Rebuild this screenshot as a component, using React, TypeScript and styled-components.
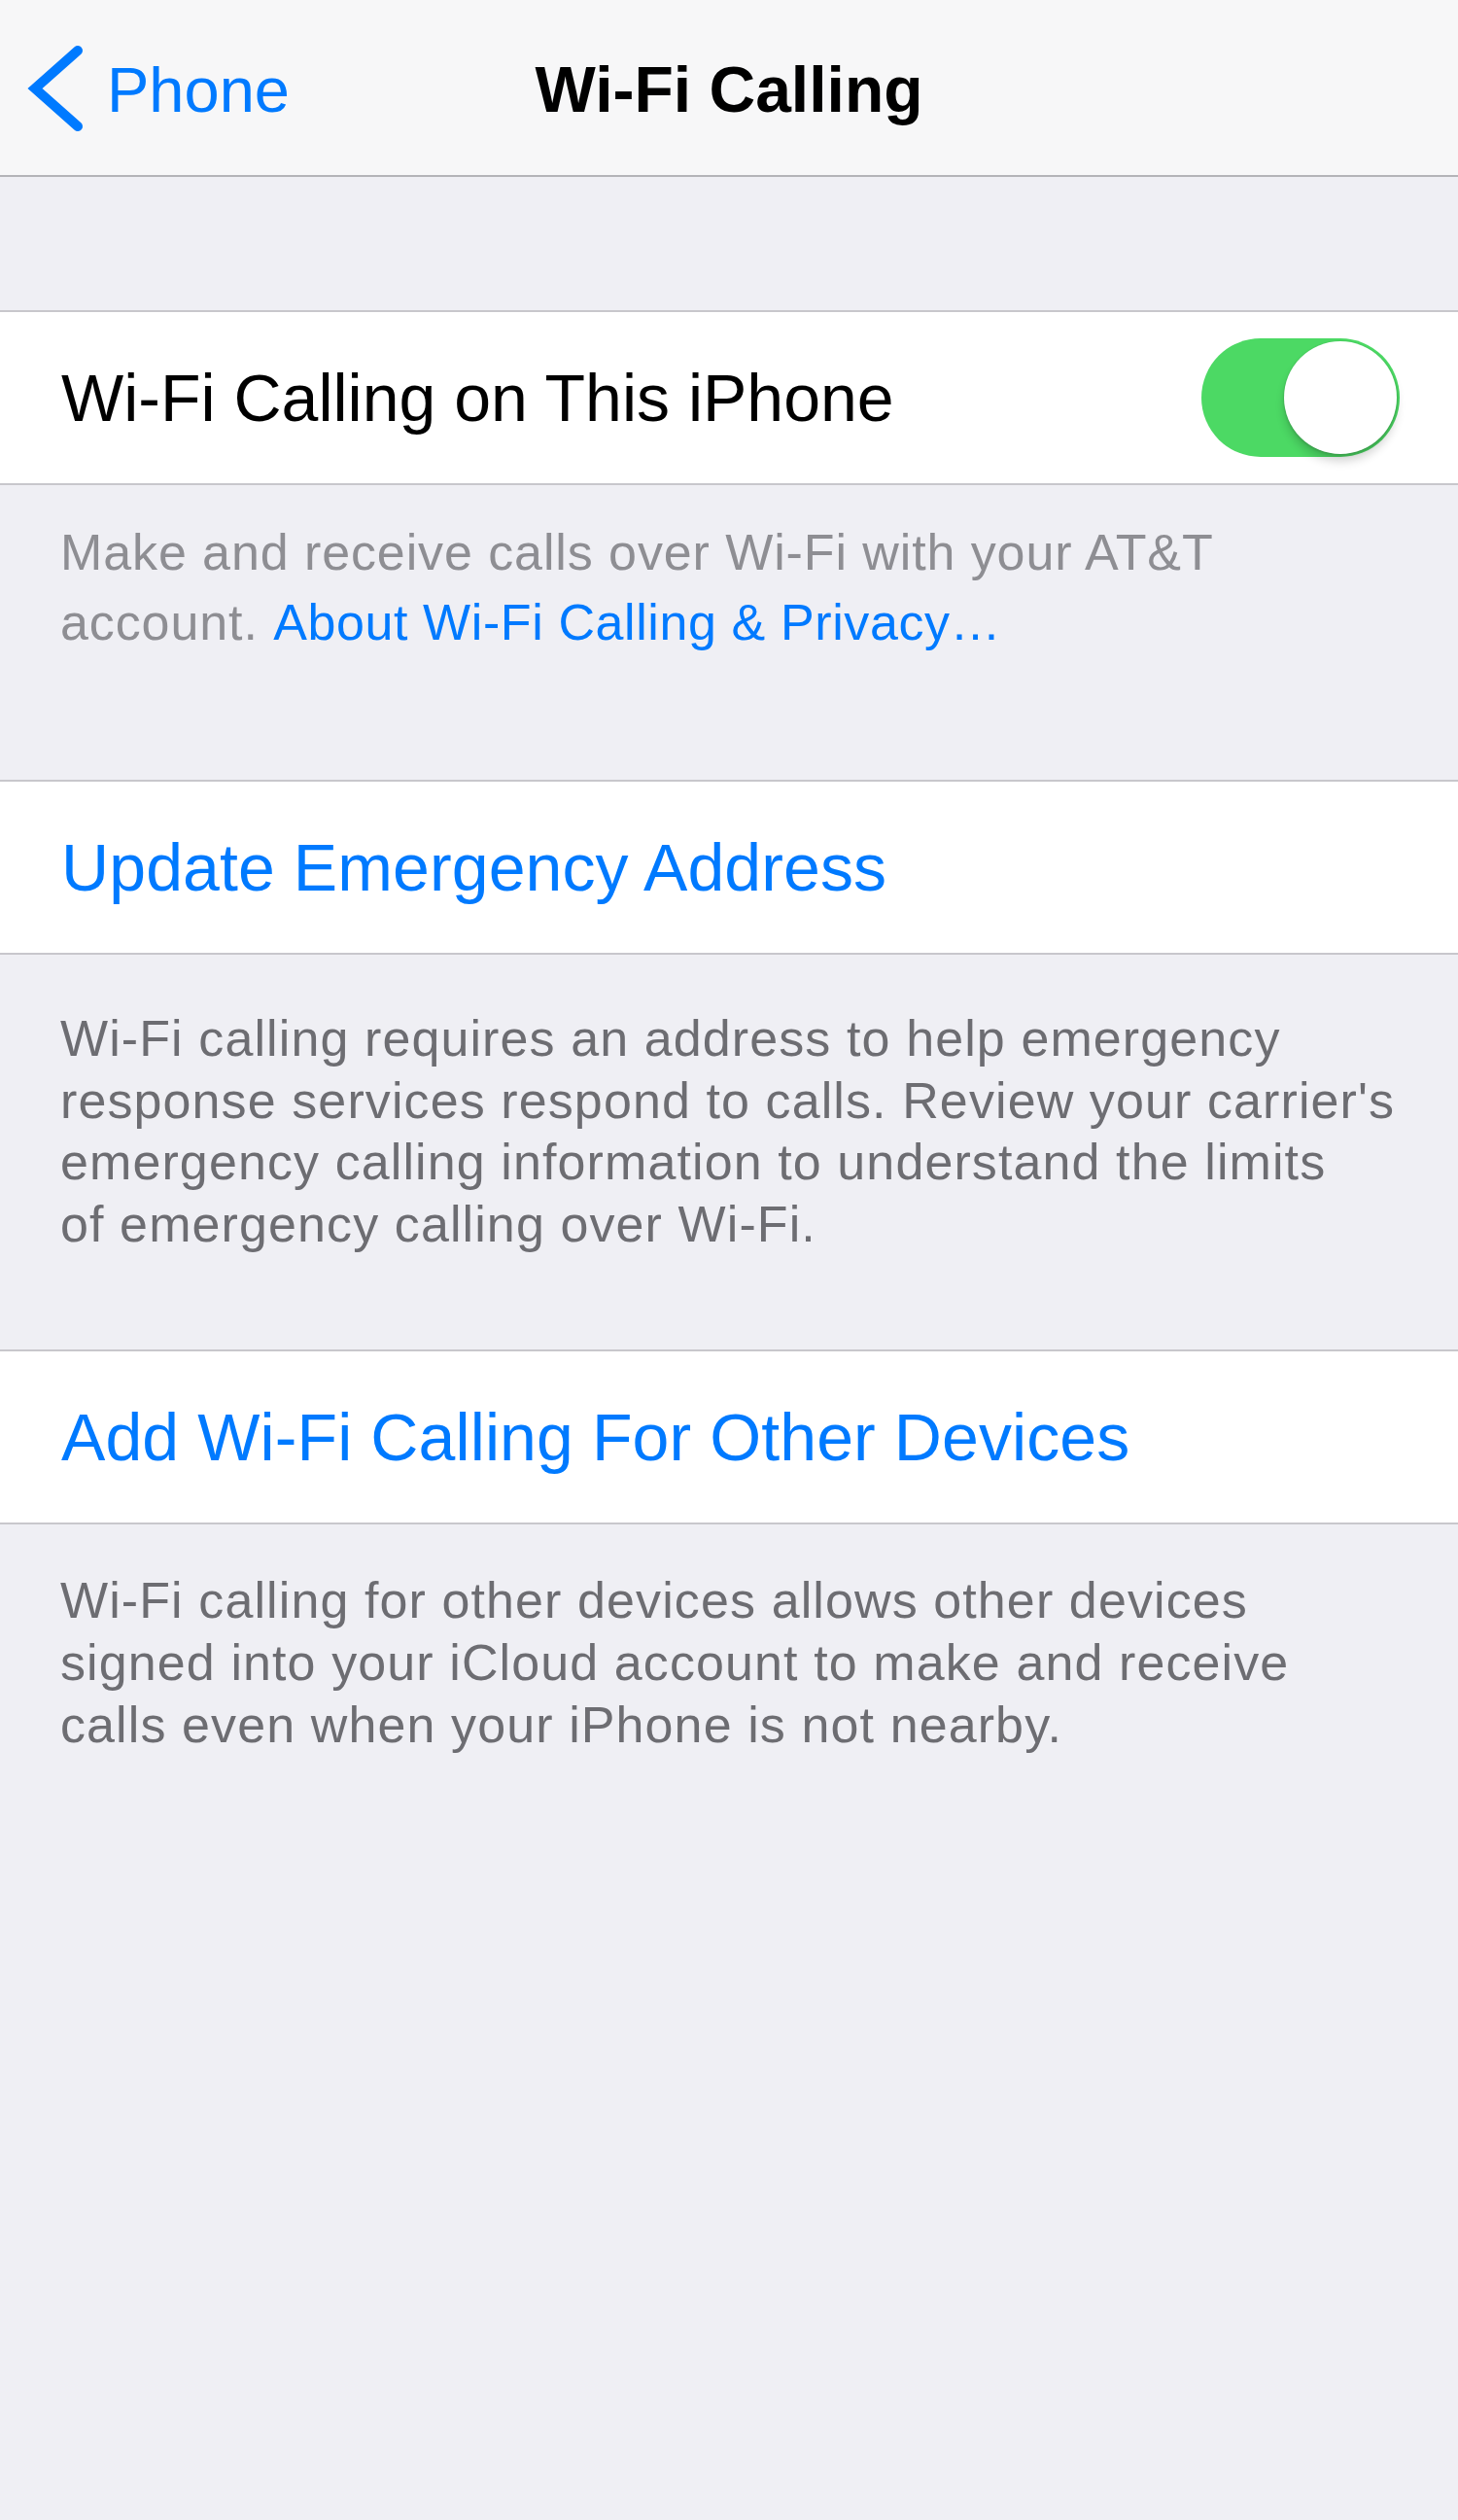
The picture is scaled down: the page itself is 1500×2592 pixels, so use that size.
import React from "react";
import styled, { createGlobalStyle } from "styled-components";

const GlobalStyle = createGlobalStyle`
  html, body {
    margin: 0;
    padding: 0;
    background: #efeff4;
  }
  body {
    font-family: "Liberation Sans", Arial, sans-serif;
    -webkit-font-smoothing: antialiased;
  }
`;

const BackChevron: React.FunctionComponent = () => (
  <svg width="60" height="96" viewBox="0 0 60 96">
    <polyline
      points="52,8 8,47 52,86"
      fill="none"
      stroke="#007aff"
      strokeWidth="10"
      strokeLinecap="round"
      strokeLinejoin="miter"
    />
  </svg>
);

const Switch: React.FunctionComponent<{ on: boolean }> = ({ on }) => (
  <Track $on={on}>
    <Thumb />
  </Track>
);

const App: React.FunctionComponent = () => {
  return (
    <Page>
      <GlobalStyle />
      <NavBar>
        <BackButton>
          <BackChevron />
          <BackLabel>Phone</BackLabel>
        </BackButton>
        <NavTitle>Wi-Fi Calling</NavTitle>
        <span />
      </NavBar>

      <Group $top={137}>
        <Cell>
          <CellLabel>Wi-Fi Calling on This iPhone</CellLabel>
          <Switch on />
        </Cell>
      </Group>
      <Footer $top={33} $bottom={126} $lineHeight={72} $light>
        Make and receive calls over Wi-Fi with your AT&amp;T account.{" "}
        <FooterLink>About Wi-Fi Calling &amp; Privacy…</FooterLink>
      </Footer>

      <Group>
        <Cell>
          <CellLabel $link>Update Emergency Address</CellLabel>
        </Cell>
      </Group>
      <Footer $top={55} $bottom={97} $lineHeight={63.5}>
        Wi-Fi calling requires an address to help emergency response services
        respond to calls. Review your carrier's emergency calling information
        to understand the limits
        <br />
        of emergency calling over Wi-Fi.
      </Footer>

      <Group>
        <Cell>
          <CellLabel $link>Add Wi-Fi Calling For Other Devices</CellLabel>
        </Cell>
      </Group>
      <Footer $top={46} $bottom={40} $lineHeight={64}>
        Wi-Fi calling for other devices allows other devices signed into your
        iCloud account to make and receive calls even when your iPhone is not
        nearby.
      </Footer>
    </Page>
  );
};

export default App;

const Page = styled.div`
  min-height: 2592px;
  background: #efeff4;
  display: flex;
  flex-direction: column;
`;

const NavBar = styled.header`
  box-sizing: border-box;
  height: 182px;
  padding-top: 4px;
  background: #f7f7f8;
  border-bottom: 2px solid #b4b4b8;
  display: grid;
  grid-template-columns: 1fr auto 1fr;
  align-items: center;
`;

const BackButton = styled.div`
  display: flex;
  align-items: center;
  gap: 22px;
  padding-left: 28px;
  color: #007aff;
`;

const BackLabel = styled.span`
  font-size: 65px;
  line-height: 1;
`;

const NavTitle = styled.h1`
  margin: 0;
  font-size: 66px;
  font-weight: 700;
  line-height: 1;
  color: #000;
`;

const Group = styled.section<{ $top?: number }>`
  margin-top: ${(p) => p.$top ?? 0}px;
  background: #fff;
  border-top: 2px solid #c8c7cc;
  border-bottom: 2px solid #c8c7cc;
`;

const Cell = styled.div`
  height: 176px;
  display: flex;
  align-items: center;
  justify-content: space-between;
  padding: 0 60px 0 63px;
`;

const CellLabel = styled.span<{ $link?: boolean }>`
  font-size: 68px;
  letter-spacing: ${(p) => (p.$link ? "0.1px" : "0")};
  line-height: 1;
  color: ${(p) => (p.$link ? "#007aff" : "#000")};
`;

const Track = styled.div<{ $on: boolean }>`
  box-sizing: border-box;
  width: 204px;
  height: 122px;
  padding: 3px;
  border-radius: 61px;
  background: ${(p) => (p.$on ? "#4cd964" : "#e5e5ea")};
  display: flex;
  justify-content: ${(p) => (p.$on ? "flex-end" : "flex-start")};
  align-items: center;
`;

const Thumb = styled.div`
  width: 116px;
  height: 116px;
  border-radius: 50%;
  background: #fff;
  box-shadow: 0 8px 10px rgba(0, 0, 0, 0.16), 0 2px 3px rgba(0, 0, 0, 0.12),
    0 0 0 1px rgba(0, 0, 0, 0.04);
`;

const Footer = styled.p<{
  $top: number;
  $bottom: number;
  $lineHeight: number;
  $light?: boolean;
}>`
  margin: 0;
  padding: ${(p) => p.$top}px 50px ${(p) => p.$bottom}px 62px;
  font-size: 52px;
  letter-spacing: ${(p) => (p.$light ? "0.9px" : "1.1px")};
  line-height: ${(p) => p.$lineHeight}px;
  color: ${(p) => (p.$light ? "#8e8e93" : "#6d6d72")};
`;

const FooterLink = styled.span`
  color: #007aff;
  letter-spacing: 0.6px;
`;
